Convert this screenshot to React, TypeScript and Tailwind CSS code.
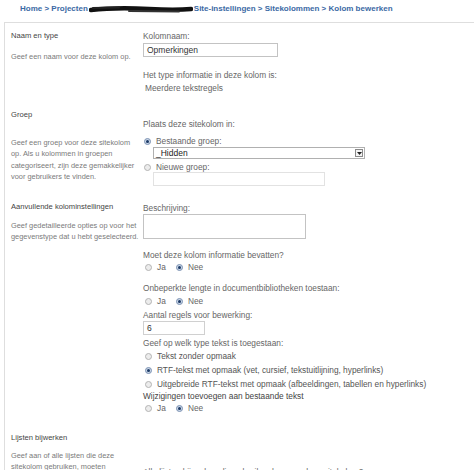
import React from 'react';

const Radio: React.FC<{ checked?: boolean }> = ({ checked }) =>
  checked ? (
    <span className="inline-flex w-[7px] h-[7px] rounded-full border border-[#7d93b3] bg-[#c9d5e6] items-center justify-center shrink-0">
      <span className="w-[3px] h-[3px] rounded-full bg-[#1b3a66]" />
    </span>
  ) : (
    <span className="inline-flex w-[7px] h-[7px] rounded-full border border-[#b4b4b4] bg-[#ececec] shrink-0" />
  );

const Option: React.FC<{ checked?: boolean; label: string; className?: string }> = ({ checked, label, className }) => (
  <div className={`flex items-center h-[10px] leading-[10px] gap-[5px] ${className ?? ''}`}>
    <Radio checked={checked} />
    <span>{label}</span>
  </div>
);

const YesNo: React.FC<{ className?: string }> = ({ className }) => (
  <div className={`flex items-center h-[10px] leading-[10px] pl-[2px] text-[#666] ${className ?? ''}`}>
    <Radio />
    <span className="ml-[5px] w-[19px]">Ja</span>
    <Radio checked />
    <span className="ml-[5px]">Nee</span>
  </div>
);

const Label: React.FC<{ children: React.ReactNode; className?: string }> = ({ children, className }) => (
  <div className={`h-[10px] leading-[10px] whitespace-nowrap ${className ?? ''}`}>{children}</div>
);

const Section: React.FC<{
  title: string;
  desc: string[];
  leftPt: string;
  descMt: string;
  descLeading: string;
  rightPt: string;
  children: React.ReactNode;
}> = ({ title, desc, leftPt, descMt, descLeading, rightPt, children }) => (
  <div className="flex">
    <div className={`w-[138px] shrink-0 pl-[6px] ${leftPt}`}>
      <div className="text-[7.6px] leading-[10px] h-[10px] text-[#444] whitespace-nowrap">{title}</div>
      <div className={`text-[7.4px] text-[#7a7a7a] ${descMt} ${descLeading}`}>
        {desc.map((d) => (
          <div key={d} className="whitespace-nowrap">{d}</div>
        ))}
      </div>
    </div>
    <div className={`flex-1 text-[8.3px] text-[#666] ${rightPt}`}>{children}</div>
  </div>
);

export default function App() {
  return (
    <div className="w-[474px] h-[470px] overflow-hidden bg-white font-['Liberation_Sans',Arial,sans-serif]">
      <div className="h-[22px] pt-[4px] pl-[20px] flex items-start text-[8px] leading-[10px] font-bold text-[#3b69a4] whitespace-nowrap">
        <span>Home &gt; Projecten</span>
        <svg width="104" height="10" viewBox="0 0 104 10" className="mx-[1px]">
          <path d="M2 6 C 20 4, 40 4, 60 5 S 90 6, 102 5" stroke="#111" strokeWidth="4.5" strokeLinecap="round" fill="none" />
          <path d="M4 4 L 30 3.5" stroke="#222" strokeWidth="2" strokeLinecap="round" fill="none" />
          <path d="M40 7 L 90 7.5" stroke="#333" strokeWidth="2" strokeLinecap="round" fill="none" />
        </svg>
        <span>Site-instellingen &gt; Sitekolommen &gt; Kolom bewerken</span>
      </div>
      <div className="ml-[4px] border-t border-l border-[#dedede]">
        <Section
          title="Naam en type"
          desc={['Geef een naam voor deze kolom op.']}
          leftPt="pt-[8px]"
          descMt="mt-[11px]"
          descLeading="leading-[10px]"
          rightPt="pt-[8px]"
        >
          <Label>Kolomnaam:</Label>
          <div className="mt-[2px] w-[135px] h-[14px] border border-[#c3c3c3] bg-white pl-[3px] text-[8.5px] leading-[12px] text-[#333]">
            Opmerkingen
          </div>
          <Label className="mt-[13px]">Het type informatie in deze kolom is:</Label>
          <Label className="mt-[3px] pl-[2px]">Meerdere tekstregels</Label>
        </Section>

        <Section
          title="Groep"
          desc={[
            'Geef een groep voor deze sitekolom',
            'op. Als u kolommen in groepen',
            'categoriseert, zijn deze gemakkelijker',
            'voor gebruikers te vinden.',
          ]}
          leftPt="pt-[17px]"
          descMt="mt-[17px]"
          descLeading="leading-[11.3px]"
          rightPt="pt-[26px]"
        >
          <Label>Plaats deze sitekolom in:</Label>
          <Option checked label="Bestaande groep:" className="mt-[7px] pl-[1px] gap-[4px]" />
          <div className="mt-[1px] ml-[10px] w-[212px] h-[12px] border border-[#b0b0b0] bg-white flex items-center justify-between">
            <span className="pl-[2px] text-[8.5px] leading-[10px] text-[#222]">_Hidden</span>
            <span className="mr-[1px] w-[8px] h-[8px] border border-[#8a8a8a] bg-[#f4f4f4] flex items-center justify-center">
              <svg width="5" height="3" viewBox="0 0 5 3">
                <path d="M0 0 L5 0 L2.5 3 Z" fill="#222" />
              </svg>
            </span>
          </div>
          <Option label="Nieuwe groep:" className="mt-[3px] pl-[1px] gap-[4px]" />
          <div className="ml-[10px] w-[172px] h-[14px] border border-[#e2e2e2] bg-white" />
        </Section>

        <Section
          title="Aanvullende kolominstellingen"
          desc={['Geef gedetailleerde opties op voor het', 'gegevenstype dat u hebt geselecteerd.']}
          leftPt="pt-[16px]"
          descMt="mt-[8px]"
          descLeading="leading-[11px]"
          rightPt="pt-[17px]"
        >
          <Label>Beschrijving:</Label>
          <div className="mt-[1px] w-[163px] h-[25px] border border-[#c3c3c3] bg-white" />
          <Label className="mt-[11px]">Moet deze kolom informatie bevatten?</Label>
          <YesNo className="mt-[2px]" />
          <Label className="mt-[11px]">Onbeperkte lengte in documentbibliotheken toestaan:</Label>
          <YesNo className="mt-[3px]" />
          <Label className="mt-[4px]">Aantal regels voor bewerking:</Label>
          <div className="mt-[1px] w-[62px] h-[14px] border border-[#d0d0d0] bg-white pl-[3px] text-[8.5px] leading-[12px] text-[#333]">
            6
          </div>
          <Label className="mt-[3px]">Geef op welk type tekst is toegestaan:</Label>
          <Option label="Tekst zonder opmaak" className="mt-[3px] pl-[2px] text-[#555]" />
          <Option checked label="RTF-tekst met opmaak (vet, cursief, tekstuitlijning, hyperlinks)" className="mt-[4px] pl-[2px] text-[#555]" />
          <Option label="Uitgebreide RTF-tekst met opmaak (afbeeldingen, tabellen en hyperlinks)" className="mt-[4px] pl-[2px] text-[#555] whitespace-nowrap" />
          <Label className="mt-[2px] text-[#444]">Wijzigingen toevoegen aan bestaande tekst</Label>
          <YesNo className="mt-[2px]" />
        </Section>

        <Section
          title="Lijsten bijwerken"
          desc={['Geef aan of alle lijsten die deze', 'sitekolom gebruiken, moeten']}
          leftPt="pt-[20px]"
          descMt="mt-[8px]"
          descLeading="leading-[10.5px]"
          rightPt="pt-[54px]"
        >
          <Label>Alle lijsten bijwerken die gebruikmaken van deze sitekolom?</Label>
        </Section>
      </div>
    </div>
  );
}
